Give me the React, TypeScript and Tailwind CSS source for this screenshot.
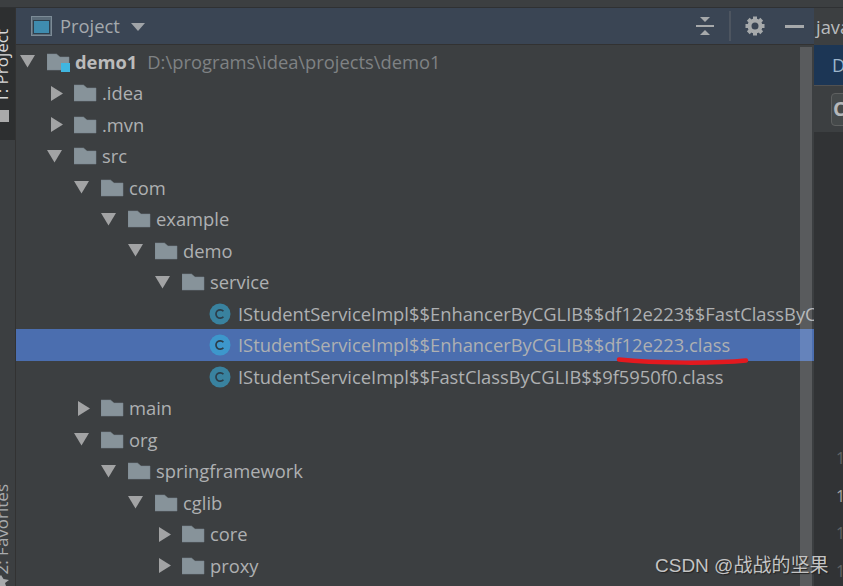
import React from "react";

const Arrow = ({ open }: { open: boolean }) => (
  <svg width="15" height="15" viewBox="0 0 15 15" className="shrink-0">
    {open ? <polygon points="0,1 15,1 7.5,13.5" fill="#a2a3a4" /> : <polygon points="2,0 14,7.5 2,15" fill="#a2a3a4" />}
  </svg>
);

const Folder = ({ mod }: { mod?: boolean }) => (
  <svg width="23" height="20" viewBox="0 0 23 20" className="shrink-0">
    <path d="M0 2h9.500l3.500 3h9v13H0z" fill="#87939a" stroke="#7a868d" strokeWidth="0.5" />
    {mod && <rect x="14" y="11" width="9" height="9" fill="#40b6e0" />}
  </svg>
);

const ClassIcon = ({ selected }: { selected?: boolean }) => (
  <svg width="22" height="22" viewBox="0 0 22 22" className="shrink-0">
    <circle cx="11" cy="11" r="10.500" fill={selected ? "#3d97cc" : "#39829f"} />
    <path d="M14.400 8.300a4.200 4.200 0 1 0 0 5.400" fill="none" stroke="#2c3e4a" strokeWidth="1.700" />
  </svg>
);

type Row = { d: string; label: string; extra?: string; kind: "open" | "closed" | "file"; bold?: boolean; sel?: boolean };

const rows: Row[] = [
  { d: "pl-[4px]", label: "demo1", extra: "D:\\programs\\idea\\projects\\demo1", kind: "open", bold: true },
  { d: "pl-[33px]", label: ".idea", kind: "closed" },
  { d: "pl-[33px]", label: ".mvn", kind: "closed" },
  { d: "pl-[31px]", label: "src", kind: "open" },
  { d: "pl-[58px]", label: "com", kind: "open" },
  { d: "pl-[85px]", label: "example", kind: "open" },
  { d: "pl-[112px]", label: "demo", kind: "open" },
  { d: "pl-[139px]", label: "service", kind: "open" },
  { d: "pl-[193px]", label: "IStudentServiceImpl$$EnhancerByCGLIB$$df12e223$$FastClassByCGLIB$$7a4e", kind: "file" },
  { d: "pl-[193px]", label: "IStudentServiceImpl$$EnhancerByCGLIB$$df12e223.class", kind: "file", sel: true },
  { d: "pl-[193px]", label: "IStudentServiceImpl$$FastClassByCGLIB$$9f5950f0.class", kind: "file" },
  { d: "pl-[60px]", label: "main", kind: "closed" },
  { d: "pl-[58px]", label: "org", kind: "open" },
  { d: "pl-[85px]", label: "springframework", kind: "open" },
  { d: "pl-[112px]", label: "cglib", kind: "open" },
  { d: "pl-[141px]", label: "core", kind: "closed" },
  { d: "pl-[141px]", label: "proxy", kind: "closed" },
];

function TreeRow({ r }: { r: Row }) {
  return (
    <div className={`flex h-[31.5px] items-center whitespace-nowrap overflow-hidden ${r.d} ${r.sel ? "bg-[#4b6eaf]" : ""}`}>
      {r.kind === "file" ? (
        <ClassIcon selected={r.sel} />
      ) : (
        <>
          <Arrow open={r.kind === "open"} />
          <span className={r.kind === "open" ? "ml-[12px] flex" : "ml-[10px] flex"}>
            <Folder mod={r.bold} />
          </span>
        </>
      )}
      <span className={`${r.kind === "file" ? "ml-[7px]" : "ml-[5px]"} ${r.bold ? "font-bold text-[#bbbbbb]" : "text-[#aeb0b2]"}`}>{r.label}</span>
      {r.extra && <span className="ml-[10px] text-[#7f8284]">{r.extra}</span>}
    </div>
  );
}

const teeth = [0, 45, 90, 135, 180, 225, 270, 315];

export default function App() {
  return (
    <div className="relative flex h-[586px] w-[843px] flex-col overflow-hidden bg-[#3c3f41] font-['Open_Sans','Noto_Sans',sans-serif] text-[18.35px]">
      <div className="h-[8px] shrink-0 border-b border-[#2f3133] bg-[#3c3f41]" />
      <div className="flex min-h-0 flex-1">
        <div className="flex w-[16px] shrink-0 flex-col justify-between overflow-hidden border-r border-[#323232]">
          <div className="flex h-[132px] flex-col items-start bg-[#2d2f30]">
            <div className="ml-[-7px] flex h-[95px] items-end">
              <span className="whitespace-nowrap text-[17px] leading-none text-[#d8d8d8] [writing-mode:vertical-rl] rotate-180">1: Project</span>
            </div>
            <div className="mt-[7px] h-[12px] w-[9px] bg-[#aaaaaa]" />
          </div>
          <div className="flex flex-col items-start">
            <span className="ml-[-7px] whitespace-nowrap text-[17px] leading-none text-[#a9abad] [writing-mode:vertical-rl] rotate-180">2: Favorites</span>
            <svg width="9" height="11" viewBox="0 0 9 11" className="mt-[1px] shrink-0">
              <polygon points="1,0 3.500,4 9,5 5,8 6,11 0,11 0,1" fill="#a9abad" />
            </svg>
          </div>
        </div>
        <div className="relative flex w-[798px] shrink-0 flex-col">
          <div className="flex h-[37px] shrink-0 items-center border-b border-[#323232] bg-[#3a4554]">
            <svg width="21" height="20" viewBox="0 0 21 20" className="ml-[15px] shrink-0">
              <rect x="0.5" y="0.5" width="20" height="19" fill="#5b6b78" stroke="#7c8b96" />
              <rect x="2.5" y="4.5" width="16" height="13" fill="#3f8caf" stroke="#2f3f4c" />
            </svg>
            <span className="ml-[8px] text-[#a5a9ad]">Project</span>
            <svg width="14" height="8" viewBox="0 0 14 8" className="ml-[11px] mt-[2px] shrink-0">
              <polygon points="0,0 14,0 7,8" fill="#a0a4a8" />
            </svg>
            <div className="ml-auto flex items-center">
              <svg width="20" height="20" viewBox="0 0 20 20">
                <rect x="1" y="9" width="18" height="2" fill="#a6a9ab" />
                <polygon points="5,1 15,1 10,6" fill="#a6a9ab" />
                <polygon points="5,19 15,19 10,14" fill="#a6a9ab" />
              </svg>
              <div className="ml-[14px] mr-[14px] h-[30px] w-[2px] bg-[#4d5560]" />
              <svg width="20" height="20" viewBox="0 0 20 20">
                <circle cx="10" cy="10" r="5.500" fill="none" stroke="#a6a9ab" strokeWidth="4" />
                {teeth.map((a) => (
                  <rect key={a} x="8" y="0.500" width="4" height="4" fill="#a6a9ab" transform={`rotate(${a} 10 10)`} />
                ))}
              </svg>
              <div className="ml-[20px] mr-[10px] h-[3px] w-[19px] bg-[#a6a9ab]" />
            </div>
          </div>
          <div className="min-h-0 flex-1 overflow-hidden pt-[0.9px]">
            {rows.map((r) => (
              <TreeRow key={r.label} r={r} />
            ))}
          </div>
          <div className="absolute bottom-0 right-[2px] top-[39px] w-[12px] bg-[#ffffff]/15" />
          <svg width="140" height="14" viewBox="0 0 140 14" className="absolute left-[600px] top-[348px]">
            <path d="M3 3.500C40 7.500 100 7.500 130 4.500" fill="none" stroke="#e3191f" strokeWidth="4.500" strokeLinecap="round" />
          </svg>
        </div>
        <div className="flex min-w-0 flex-1 flex-col bg-[#313335]">
          <div className="flex h-[37px] shrink-0 items-center bg-[#3c3f41] pl-[2px] text-[#b9bbbd]">java</div>
          <div className="flex h-[41px] shrink-0 items-center border-b border-[#515151] bg-[#1c3655] pl-[18px] text-[#9fb6cc]">D</div>
          <div className="flex h-[46px] shrink-0 items-center bg-[#3c3f41] pl-[17px]">
            <div className="flex h-[33px] w-[20px] items-center rounded-l-[4px] border border-[#5e6060] bg-[#45494a] pl-[1px] text-[20px] font-bold text-[#b5b7b9]">C</div>
          </div>
          <div className="flex flex-1 flex-col items-start pl-[22px] pt-[308px] text-[16px] leading-[37.5px] text-[#606366]">
            <span>1</span>
            <span className="text-[#a4a3a3]">1</span>
            <span>1</span>
            <span>1</span>
          </div>
        </div>
      </div>
      <div className="absolute bottom-[6px] left-[655px] whitespace-nowrap font-['Liberation_Sans','Noto_Sans_CJK_SC',sans-serif] text-[19px] leading-[28px] text-[#c4c4c4] [text-shadow:1px_1px_1px_#222]">
        CSDN @战战的坚果
      </div>
    </div>
  );
}
